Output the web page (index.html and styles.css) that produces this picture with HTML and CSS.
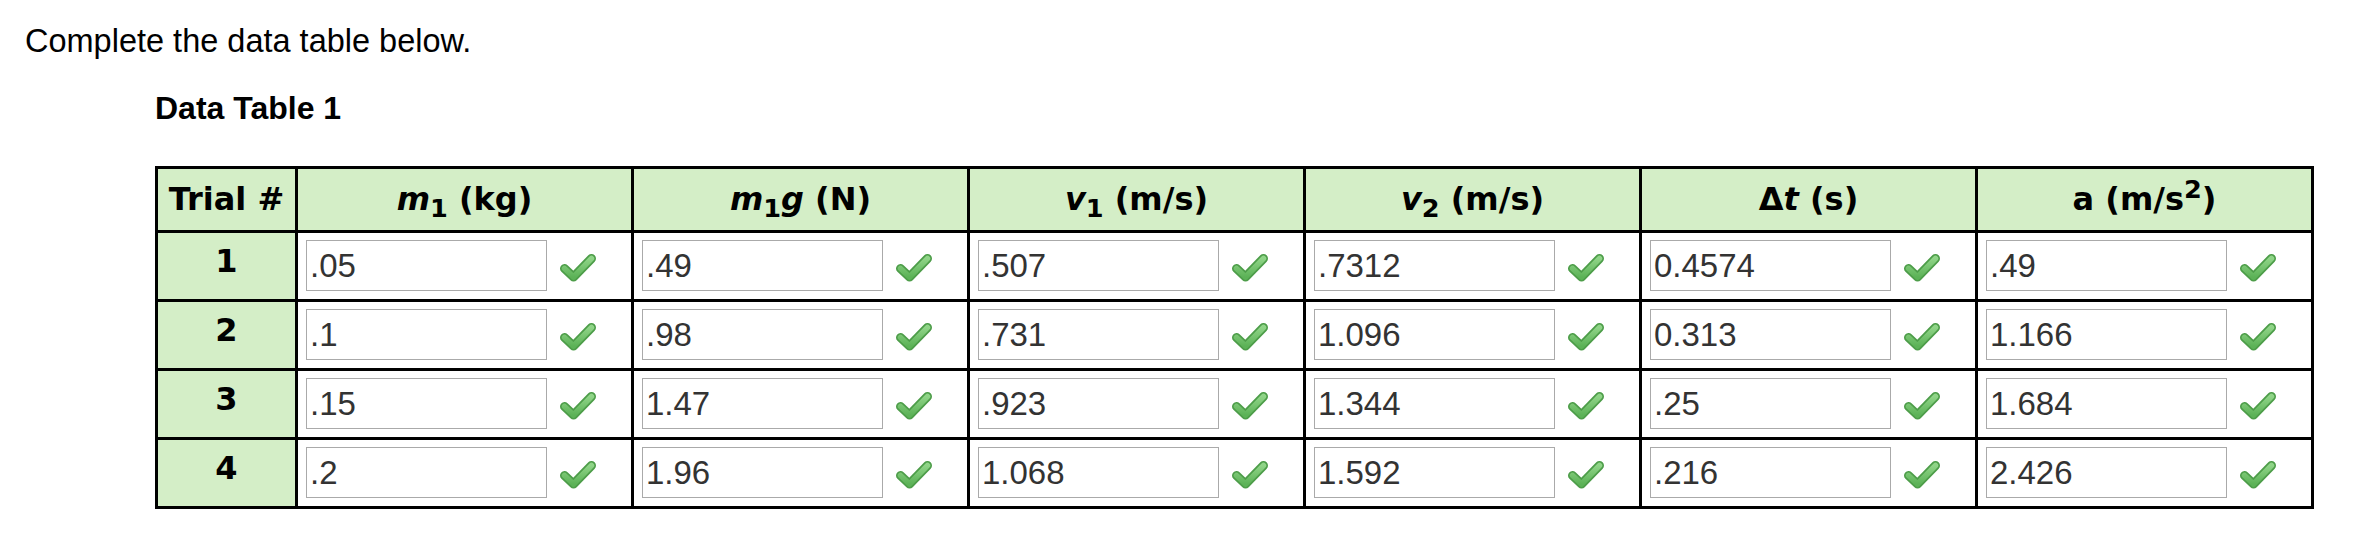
FILE: index.html
```html
<!DOCTYPE html>
<html lang="en">
<head>
<meta charset="utf-8">
<title>Data Table 1</title>
<link rel="stylesheet" href="styles.css">
</head>
<body>
<div class="page">
  <p class="intro">Complete the data table below.</p>
  <div class="block">
    <h2 class="caption">Data Table 1</h2>
    <table class="data">
      <colgroup>
        <col class="col-trial">
        <col class="col-val"><col class="col-val"><col class="col-val">
        <col class="col-val"><col class="col-val"><col class="col-val">
      </colgroup>
      <thead>
        <tr>
          <th>Trial #</th>
          <th><i>m</i><sub>1</sub> (kg)</th>
          <th><i>m</i><sub>1</sub><i>g</i> (N)</th>
          <th><i>v</i><sub>1</sub> (m/s)</th>
          <th><i>v</i><sub>2</sub> (m/s)</th>
          <th>Δ<i>t</i> (s)</th>
          <th>a (m/s<sup>2</sup>)</th>
        </tr>
      </thead>
      <tbody>
        <tr>
          <td class="trial">1</td>
          <td><div class="ans"><input class="field" type="text" value=".05"><svg class="check" viewBox="0 0 40 32"><use href="#ck"/></svg></div></td>
          <td><div class="ans"><input class="field" type="text" value=".49"><svg class="check" viewBox="0 0 40 32"><use href="#ck"/></svg></div></td>
          <td><div class="ans"><input class="field" type="text" value=".507"><svg class="check" viewBox="0 0 40 32"><use href="#ck"/></svg></div></td>
          <td><div class="ans"><input class="field" type="text" value=".7312"><svg class="check" viewBox="0 0 40 32"><use href="#ck"/></svg></div></td>
          <td><div class="ans"><input class="field" type="text" value="0.4574"><svg class="check" viewBox="0 0 40 32"><use href="#ck"/></svg></div></td>
          <td><div class="ans"><input class="field" type="text" value=".49"><svg class="check" viewBox="0 0 40 32"><use href="#ck"/></svg></div></td>
        </tr>
        <tr>
          <td class="trial">2</td>
          <td><div class="ans"><input class="field" type="text" value=".1"><svg class="check" viewBox="0 0 40 32"><use href="#ck"/></svg></div></td>
          <td><div class="ans"><input class="field" type="text" value=".98"><svg class="check" viewBox="0 0 40 32"><use href="#ck"/></svg></div></td>
          <td><div class="ans"><input class="field" type="text" value=".731"><svg class="check" viewBox="0 0 40 32"><use href="#ck"/></svg></div></td>
          <td><div class="ans"><input class="field" type="text" value="1.096"><svg class="check" viewBox="0 0 40 32"><use href="#ck"/></svg></div></td>
          <td><div class="ans"><input class="field" type="text" value="0.313"><svg class="check" viewBox="0 0 40 32"><use href="#ck"/></svg></div></td>
          <td><div class="ans"><input class="field" type="text" value="1.166"><svg class="check" viewBox="0 0 40 32"><use href="#ck"/></svg></div></td>
        </tr>
        <tr>
          <td class="trial">3</td>
          <td><div class="ans"><input class="field" type="text" value=".15"><svg class="check" viewBox="0 0 40 32"><use href="#ck"/></svg></div></td>
          <td><div class="ans"><input class="field" type="text" value="1.47"><svg class="check" viewBox="0 0 40 32"><use href="#ck"/></svg></div></td>
          <td><div class="ans"><input class="field" type="text" value=".923"><svg class="check" viewBox="0 0 40 32"><use href="#ck"/></svg></div></td>
          <td><div class="ans"><input class="field" type="text" value="1.344"><svg class="check" viewBox="0 0 40 32"><use href="#ck"/></svg></div></td>
          <td><div class="ans"><input class="field" type="text" value=".25"><svg class="check" viewBox="0 0 40 32"><use href="#ck"/></svg></div></td>
          <td><div class="ans"><input class="field" type="text" value="1.684"><svg class="check" viewBox="0 0 40 32"><use href="#ck"/></svg></div></td>
        </tr>
        <tr>
          <td class="trial">4</td>
          <td><div class="ans"><input class="field" type="text" value=".2"><svg class="check" viewBox="0 0 40 32"><use href="#ck"/></svg></div></td>
          <td><div class="ans"><input class="field" type="text" value="1.96"><svg class="check" viewBox="0 0 40 32"><use href="#ck"/></svg></div></td>
          <td><div class="ans"><input class="field" type="text" value="1.068"><svg class="check" viewBox="0 0 40 32"><use href="#ck"/></svg></div></td>
          <td><div class="ans"><input class="field" type="text" value="1.592"><svg class="check" viewBox="0 0 40 32"><use href="#ck"/></svg></div></td>
          <td><div class="ans"><input class="field" type="text" value=".216"><svg class="check" viewBox="0 0 40 32"><use href="#ck"/></svg></div></td>
          <td><div class="ans"><input class="field" type="text" value="2.426"><svg class="check" viewBox="0 0 40 32"><use href="#ck"/></svg></div></td>
        </tr>
      </tbody>
    </table>
  </div>
</div>
<svg class="defs" width="0" height="0" aria-hidden="true">
  <defs>
    <linearGradient id="ckg" x1="0" y1="0" x2="0" y2="1">
      <stop offset="0" stop-color="#8fd487"/>
      <stop offset="1" stop-color="#5cb257"/>
    </linearGradient>
    <g id="ck">
      <path d="M6.5 16.5 L15.5 25 L33.5 6.5" fill="none" stroke="#4d9d49" stroke-width="9" stroke-linejoin="round" stroke-linecap="round"/>
      <path d="M6.5 16.5 L15.5 25 L33.5 6.5" fill="none" stroke="url(#ckg)" stroke-width="5.5" stroke-linejoin="round" stroke-linecap="round"/>
    </g>
  </defs>
</svg>
</body>
</html>
```

FILE: styles.css
```css
html, body {
  margin: 0;
  padding: 0;
  background: #ffffff;
}

.page {
  padding: 23px 0 0 25px;
  font-family: "Liberation Sans", Arial, sans-serif;
  color: #000;
}

.intro {
  margin: 0;
  font-size: 32.5px;
  line-height: 37px;
}

.block {
  margin-left: 130px;
}

.caption {
  margin: 30px 0 0 0;
  font-size: 32px;
  line-height: 37px;
  font-weight: bold;
}

.data {
  margin-top: 39px;
  table-layout: fixed;
  width: 2159px;
  border-collapse: separate;
  border-spacing: 0;
  border-top: 3px solid #000;
  border-left: 3px solid #000;
}

.col-trial { width: 140px; }
.col-val { width: 336px; }

.data th,
.data td {
  border-right: 3px solid #000;
  border-bottom: 3px solid #000;
}

.data th {
  box-sizing: border-box;
  height: 64px;
  padding: 0;
  background: #d4eec7;
  font-family: "DejaVu Sans", Verdana, sans-serif;
  font-weight: bold;
  font-size: 32px;
  line-height: 37px;
  text-align: center;
  vertical-align: middle;
  white-space: nowrap;
}

.data th i {
  font-style: italic;
}

.data th sub {
  font-size: 0.8em;
  vertical-align: -0.28em;
  line-height: 0;
}

.data th sup {
  font-size: 0.8em;
  vertical-align: 0.45em;
  line-height: 0;
}

.data td {
  padding: 7px 8px 8px 8px;
  vertical-align: top;
}

.data td.trial {
  background: #d4eec7;
  padding: 10px 0 0 0;
  font-family: "DejaVu Sans", Verdana, sans-serif;
  font-weight: bold;
  font-size: 32px;
  line-height: 37px;
  text-align: center;
}

.ans {
  display: flex;
  align-items: flex-start;
}

.field {
  box-sizing: border-box;
  width: 241px;
  height: 51px;
  margin: 0;
  padding: 0 3px;
  border: 1px solid #aaaaaa;
  border-radius: 0;
  background: #fff;
  font-family: "Liberation Sans", Arial, sans-serif;
  font-size: 33px;
  color: #333333;
  outline: none;
}

.check {
  flex: none;
  width: 40px;
  height: 32px;
  margin: 12px 0 0 11px;
}

.defs {
  position: absolute;
  width: 0;
  height: 0;
  overflow: hidden;
}
```
